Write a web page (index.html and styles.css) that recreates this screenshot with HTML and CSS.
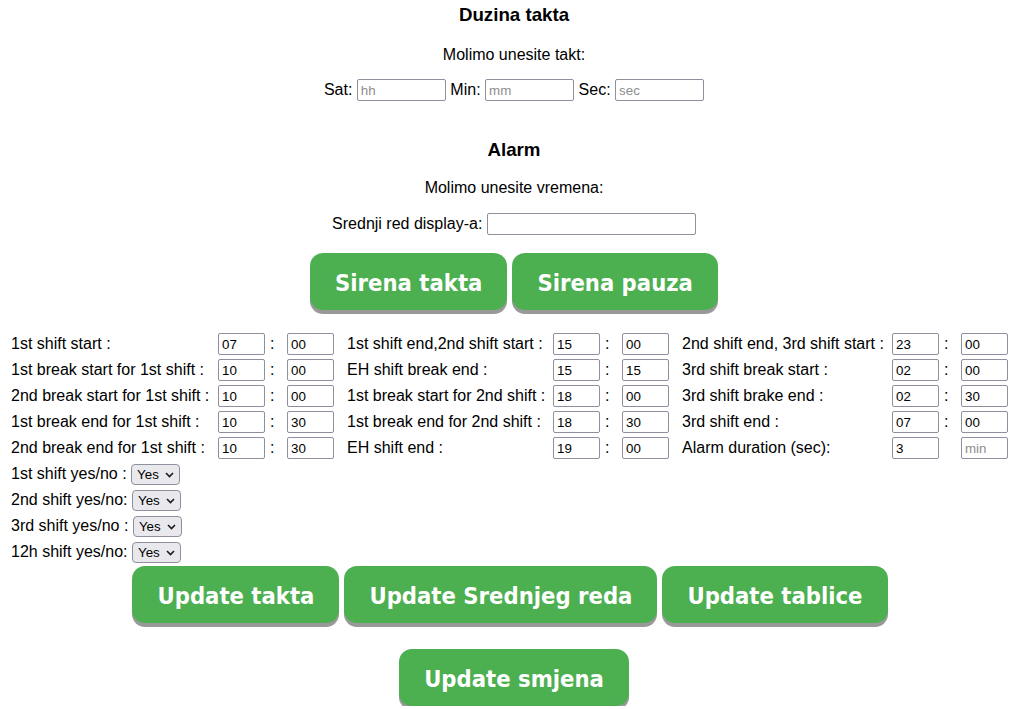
FILE: index.html
```html
<!DOCTYPE html>
<html lang="hr">
<head>
    <meta charset="UTF-8">
    <meta name="viewport" content="width=device-width, initial-scale=1.0">
    <title>Postavke sirene</title>
    <link rel="stylesheet" href="styles.css">
</head>
<body>
    <div class="center">
        <h3 class="title">Duzina takta</h3>
        <p class="lead">Molimo unesite takt:</p>
        <div class="line">
            <span>Sat:</span><input type="text" class="wide" placeholder="hh">
            <span>Min:</span><input type="text" class="wide" placeholder="mm">
            <span>Sec:</span><input type="text" class="wide" placeholder="sec">
        </div>

        <h3 class="title alarm">Alarm</h3>
        <p class="lead lead-2">Molimo unesite vremena:</p>
        <div class="line line-2">
            <span>Srednji red display-a:</span><input type="text" class="long">
        </div>

        <div class="buttons sirens">
            <button>Sirena takta</button>
            <button>Sirena pauza</button>
        </div>
    </div>

    <div class="times">
        <span class="lbl">1st shift start :</span>
        <input type="text" class="num" value="07"><span class="col">:</span><input type="text" class="num" value="00">
        <span class="lbl pad">1st shift end,2nd shift start :</span>
        <input type="text" class="num" value="15"><span class="col">:</span><input type="text" class="num" value="00">
        <span class="lbl pad">2nd shift end, 3rd shift start :</span>
        <input type="text" class="num" value="23"><span class="col">:</span><input type="text" class="num" value="00">

        <span class="lbl">1st break start for 1st shift :</span>
        <input type="text" class="num" value="10"><span class="col">:</span><input type="text" class="num" value="00">
        <span class="lbl pad">EH shift break end :</span>
        <input type="text" class="num" value="15"><span class="col">:</span><input type="text" class="num" value="15">
        <span class="lbl pad">3rd shift break start :</span>
        <input type="text" class="num" value="02"><span class="col">:</span><input type="text" class="num" value="00">

        <span class="lbl">2nd break start for 1st shift :</span>
        <input type="text" class="num" value="10"><span class="col">:</span><input type="text" class="num" value="00">
        <span class="lbl pad">1st break start for 2nd shift :</span>
        <input type="text" class="num" value="18"><span class="col">:</span><input type="text" class="num" value="00">
        <span class="lbl pad">3rd shift brake end :</span>
        <input type="text" class="num" value="02"><span class="col">:</span><input type="text" class="num" value="30">

        <span class="lbl">1st break end for 1st shift :</span>
        <input type="text" class="num" value="10"><span class="col">:</span><input type="text" class="num" value="30">
        <span class="lbl pad">1st break end for 2nd shift :</span>
        <input type="text" class="num" value="18"><span class="col">:</span><input type="text" class="num" value="30">
        <span class="lbl pad">3rd shift end :</span>
        <input type="text" class="num" value="07"><span class="col">:</span><input type="text" class="num" value="00">

        <span class="lbl">2nd break end for 1st shift :</span>
        <input type="text" class="num" value="10"><span class="col">:</span><input type="text" class="num" value="30">
        <span class="lbl pad">EH shift end :</span>
        <input type="text" class="num" value="19"><span class="col">:</span><input type="text" class="num" value="00">
        <span class="lbl pad">Alarm duration (sec):</span>
        <input type="text" class="num" value="3"><span class="col"></span><input type="text" class="num" placeholder="min">
    </div>

    <div class="shifts">
        <div class="yn">1st shift yes/no :
            <span class="sel"><select><option>Yes</option><option>No</option></select><svg viewBox="0 0 9 6" width="9" height="6"><path d="M1 1 L4.5 4.5 L8 1" fill="none" stroke="#1b1b1b" stroke-width="1.6"/></svg></span>
        </div>
        <div class="yn">2nd shift yes/no:
            <span class="sel"><select><option>Yes</option><option>No</option></select><svg viewBox="0 0 9 6" width="9" height="6"><path d="M1 1 L4.5 4.5 L8 1" fill="none" stroke="#1b1b1b" stroke-width="1.6"/></svg></span>
        </div>
        <div class="yn">3rd shift yes/no :
            <span class="sel"><select><option>Yes</option><option>No</option></select><svg viewBox="0 0 9 6" width="9" height="6"><path d="M1 1 L4.5 4.5 L8 1" fill="none" stroke="#1b1b1b" stroke-width="1.6"/></svg></span>
        </div>
        <div class="yn">12h shift yes/no:
            <span class="sel"><select><option>Yes</option><option>No</option></select><svg viewBox="0 0 9 6" width="9" height="6"><path d="M1 1 L4.5 4.5 L8 1" fill="none" stroke="#1b1b1b" stroke-width="1.6"/></svg></span>
        </div>
    </div>

    <div class="buttons updates">
        <button>Update takta</button>
        <button>Update Srednjeg reda</button>
        <button>Update tablice</button>
    </div>
    <div class="buttons updates-2">
        <button>Update smjena</button>
    </div>
</body>
</html>
```

FILE: styles.css
```css
body {
    margin: 0;
    font-family: "Liberation Sans", Arial, sans-serif;
    font-size: 16px;
    color: #000;
    background: #fff;
}
.center {
    text-align: center;
    padding-left: 5px;
}
.title {
    font-size: 18.72px;
    line-height: 22px;
    margin: 4px 0 0;
}
.alarm {
    margin-top: 37px;
    padding-top: 1px;
}
.lead {
    margin: 19px 0 0;
    line-height: 20px;
}
.lead-2 {
    margin-top: 17px;
}
.line {
    display: flex;
    justify-content: center;
    align-items: center;
    gap: 4.5px;
    height: 22px;
    margin-top: 14px;
}
.line-2 {
    margin-top: 15px;
}
input {
    box-sizing: border-box;
    height: 22px;
    border: 1px solid #8f8f9d;
    border-radius: 2px;
    padding: 0 3px;
    font-family: "Liberation Sans", Arial, sans-serif;
    font-size: 13.33px;
    color: #000;
    background: #fff;
    margin: 0;
}
input::placeholder {
    color: #8d8d8d;
}
.wide {
    width: 89px;
}
.long {
    width: 209px;
}
.buttons {
    display: flex;
    justify-content: center;
    gap: 5px;
}
.sirens {
    margin-top: 18px;
}
button {
    height: 57px;
    padding: 2px 25px 0;
    border: none;
    border-radius: 13px;
    background-color: #4CAF50;
    box-shadow: 0 4px #999;
    color: white;
    font-family: "DejaVu Sans Condensed", "DejaVu Sans", sans-serif;
    font-stretch: condensed;
    font-size: 23.6px;
    font-weight: bold;
    cursor: pointer;
}
.times {
    display: grid;
    grid-template-columns: 207px 47px 22px 47px 219px 47px 22px 47px 223px 47px 22px 47px;
    grid-auto-rows: 22px;
    row-gap: 4px;
    align-items: center;
    margin: 23px 0 0 11px;
}
.num {
    width: 47px;
}
.lbl {
    white-space: nowrap;
}
.pad {
    padding-left: 13px;
}
.col {
    padding-left: 5px;
}
.shifts {
    display: flex;
    flex-direction: column;
    gap: 4px;
    margin: 4px 0 0 11px;
}
.yn {
    display: flex;
    align-items: center;
    gap: 4.5px;
    height: 22px;
}
.sel {
    position: relative;
    display: inline-flex;
}
select {
    appearance: none;
    -webkit-appearance: none;
    box-sizing: border-box;
    width: 49px;
    height: 21px;
    margin: 0;
    padding: 0 0 0 5px;
    border: 1px solid #8f8f9d;
    border-radius: 4px;
    background: #e9e9ed;
    color: #000;
    font-family: "Liberation Sans", Arial, sans-serif;
    font-size: 13.33px;
}
.sel svg {
    position: absolute;
    right: 6px;
    top: 8px;
    pointer-events: none;
}
.updates {
    margin-top: 3px;
    padding-right: 3px;
}
.updates-2 {
    margin-top: 26px;
    padding-left: 5px;
}
```
